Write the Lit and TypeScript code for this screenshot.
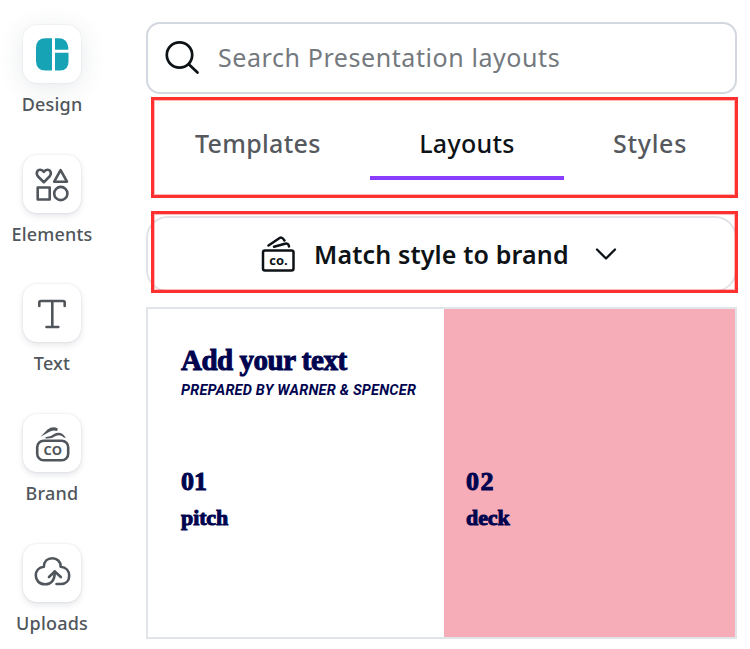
import { LitElement, html, css, svg } from "lit";
import { customElement, property } from "lit/decorators.js";

const icons: Record<string, unknown> = {
  design: svg`<g fill="#16a3b6"><path d="M19 3.200V35.500H12.500Q3 35.500 3 26V13Q3 3.200 12.500 3.200Z"/><path d="M22 3.200H26Q35 3.200 35.400 14.800H22Z"/><path d="M22 17.800H35.500V26.500Q35.500 35.500 27 35.500H22Z"/></g>`,
  elements: svg`<g fill="none" stroke="#50565b" stroke-width="2.6" stroke-linejoin="round"><path d="M10.800 18.200 5.300 12.800C2.300 9.500 4.200 5.700 7.200 5.700c1.800 0 2.900 1 3.600 2.200.7-1.200 1.800-2.200 3.600-2.200 3 0 4.900 3.800 1.900 7.100Z"/><path d="M27.600 6.100 34 17.700H21.200Z"/><rect x="4.700" y="23.500" width="12" height="12"/><circle cx="27.800" cy="29.500" r="6.600"/></g>`,
  text: svg`<g fill="none" stroke="#50565b" stroke-width="2.600" stroke-linecap="round" stroke-linejoin="round"><path d="M6.300 12V8.500Q6.300 7 7.800 7H30.200Q31.700 7 31.700 8.500V12M19.300 7V33M13.500 33H25.300"/></g>`,
  brand: svg`<g fill="none" stroke="#50565b" stroke-width="2.600" stroke-linecap="round" stroke-linejoin="round"><rect x="4.200" y="16.700" width="31" height="19.500" rx="6.500"/></g><g fill="#50565b"><path d="M7.500 12.800 14.500 5.600Q19.500 1.800 24.800 4.400L24.200 7Q19.500 5.300 15.700 8.300Z"/><path d="M12.500 13.300Q18 12.800 21.500 9.700 28.500 6.500 33 14.200L30.500 13.200Q27 9.800 22.700 12 18.500 15 12.500 14.400Z"/></g><text x="19.700" y="31.200" text-anchor="middle" class="mark">CO</text>`,
  uploads: svg`<g fill="none" stroke="#50565b" stroke-width="2.600" stroke-linecap="round" stroke-linejoin="round"><path d="M23.500 31H28C33 31 36.200 27.500 36.200 22.700 36.200 18 33 14.300 27.700 13.700 27.700 8.500 24 5.200 19.300 5.200 14.500 5.200 11 8.500 10.900 13.700 5.800 14.300 2.800 18 2.800 22.500 2.800 27.500 6.300 31.300 12 31.300 18 31.300 21.800 28 21.800 18.500"/><path d="m16 24 5.800-5.500 6 5.500"/></g>`,
};

@customElement("nav-item")
class NavItem extends LitElement {
  @property() icon = "";
  @property() label = "";
  @property({ type: Boolean, reflect: true }) active = false;
  static styles = css`
    :host { display: flex; flex: none; flex-direction: column; align-items: center; width: 104px; height: 129.700px; }
    .tile { width: 58px; height: 58px; border-radius: 14px; background: #fff; display: grid; place-items: center; box-shadow: 0 0 2px rgba(60, 70, 90, .17), 0 3px 6px rgba(60, 70, 90, .13); }
    :host([active]) .tile { box-shadow: 0 0 2px rgba(60, 70, 90, .13), 0 5px 26px rgba(60, 70, 90, .12); }
    svg { width: 39px; height: 39px; display: block; }
    .mark { font: 700 13px "Open Sans", sans-serif; fill: #50565b; }
    .label { margin-top: 9px; font: 550 18px/25px "Noto Sans", sans-serif; letter-spacing: .2px; color: #50565b; white-space: nowrap; }
  `;
  render() {
    return html`<div class="tile"><svg viewBox="0 0 39 39">${icons[this.icon]}</svg></div><span class="label">${this.label}</span>`;
  }
}

@customElement("app-root")
class AppRoot extends LitElement {
  static styles = css`
    * { box-sizing: border-box; }
    :host { display: flex; width: 750px; height: 649px; overflow: hidden; background: #fff; font-family: "Noto Sans", sans-serif; }
    nav { width: 146px; padding-top: 25px; display: flex; flex-direction: column; flex: none; }
    main { width: 591px; padding-top: 22px; display: flex; flex-direction: column; }
    .search { height: 72px; border: 2px solid #d3d7df; border-radius: 14px; display: flex; align-items: center; padding-left: 17px; flex: none; }
    .search svg { width: 36px; height: 36px; margin-right: 17px; }
    .search span { font-size: 25px; color: #74797e; white-space: nowrap; letter-spacing: .580px; margin-top: -2px; }
    .framed { border: 3px solid #ff3030; box-shadow: inset 0 0 0 1px rgba(255, 48, 48, .35); }
    .tabs { margin: 3px -1px 0 5px; height: 101px; display: grid; grid-template-columns: 175px 194px 1fr; padding-left: 41px; flex: none; }
    .tab { padding-top: 28px; height: 80px; font-size: 25px; line-height: 30px; font-weight: 550; color: #55595e; white-space: nowrap; letter-spacing: .3px; }
    .tab.current { color: #0d1216; text-align: center; border-bottom: 4px solid #8b3dff; }
    .tab.last { padding-left: 49px; letter-spacing: .7px; }
    .match-row { position: relative; margin-top: 18px; height: 76px; flex: none; }
    .match { height: 76px; border: 2px solid #e1e3e7; border-radius: 22px; display: flex; align-items: center; padding-left: 112px; color: #0d1216; }
    .outline { position: absolute; left: 5px; top: -5px; width: 587px; height: 82px; }
    .match .brand { width: 36px; height: 38px; margin-right: 18px; }
    .match .word { font: 700 13px "Open Sans", sans-serif; fill: #0d1216; }
    .match span { font-size: 25px; font-weight: 600; white-space: nowrap; letter-spacing: .150px; }
    .match .chevron { width: 24px; height: 16px; margin-left: 25px; }
    .slide { margin-top: 15px; height: 332px; border: 2px solid #e1e4e8; display: grid; grid-template-columns: 296px 1fr; flex: none; color: #00044f; }
    .left { padding: 34px 0 0 33px; }
    .right { background: #f6adb8; padding: 34px 0 0 22px; }
    .serif { font-family: "Liberation Serif", serif; font-weight: 700; -webkit-text-stroke: 1px #00044f; white-space: nowrap; }
    .title { font-size: 29px; line-height: 34px; height: 36px; letter-spacing: -.480px; }
    .prepared { font: italic 700 14.500px/20px Roboto, sans-serif; letter-spacing: .210px; height: 20px; margin-top: 2px; white-space: nowrap; }
    .number { font-size: 26px; line-height: 30px; margin-top: 66px; }
    .right .number { letter-spacing: 1.500px; }
    .name { font-size: 22px; line-height: 28px; margin-top: 7px; letter-spacing: -.100px; }
    .spacer { height: 58px; }
  `;
  render() {
    return html`
      <nav>
        <nav-item icon="design" label="Design" active></nav-item>
        <nav-item icon="elements" label="Elements"></nav-item>
        <nav-item icon="text" label="Text"></nav-item>
        <nav-item icon="brand" label="Brand"></nav-item>
        <nav-item icon="uploads" label="Uploads"></nav-item>
      </nav>
      <main>
        <div class="search">
          <svg viewBox="0 0 36 36" fill="none" stroke="#0d1216" stroke-width="2.700" stroke-linecap="round"><circle cx="14.500" cy="15" r="12.700"/><path d="m24 24.500 8.500 8"/></svg>
          <span>Search Presentation layouts</span>
        </div>
        <div class="tabs framed">
          <div class="tab">Templates</div>
          <div class="tab current">Layouts</div>
          <div class="tab last">Styles</div>
        </div>
        <div class="match-row">
          <div class="match">
            <svg class="brand" viewBox="0 0 36 38" fill="none" stroke="#0d1216" stroke-width="2.500" stroke-linejoin="round" stroke-linecap="round"><rect x="3" y="15.500" width="30.500" height="20" rx="2"/><path d="M8.500 10.500 20 2.800Q22 1.700 24.500 5.500"/><path d="M14 11.700 25 8.700Q28.500 8 29 11.500"/><text x="18.500" y="29.500" text-anchor="middle" class="word" stroke="none">co.</text></svg>
            <span>Match style to brand</span>
            <svg class="chevron" viewBox="0 0 24 16" fill="none" stroke="#0d1216" stroke-width="2.300" stroke-linecap="round" stroke-linejoin="round"><path d="m3 3.500 9 9 9-9"/></svg>
          </div>
          <div class="outline framed"></div>
        </div>
        <div class="slide">
          <div class="left">
            <div class="serif title">Add your text</div>
            <div class="prepared">PREPARED BY WARNER &amp; SPENCER</div>
            <div class="serif number">01</div>
            <div class="serif name">pitch</div>
          </div>
          <div class="right">
            <div class="spacer"></div>
            <div class="serif number">02</div>
            <div class="serif name">deck</div>
          </div>
        </div>
      </main>`;
  }
}
